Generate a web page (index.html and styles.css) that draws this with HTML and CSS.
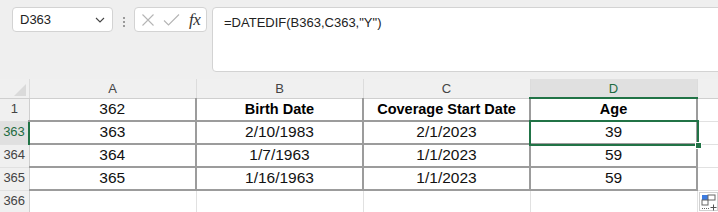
FILE: index.html
```html
<!DOCTYPE html>
<html lang="en">

<head>
    <meta charset="UTF-8">
    <title>DATEDIF Age</title>
    <link rel="stylesheet" href="styles.css">
</head>

<body>
    <div class="ribbon">
        <div class="name-box">
            <span>D363</span>
            <svg class="chevron" width="10" height="6" viewBox="0 0 10 6">
                <path d="M1 1 L5 5 L9 1" fill="none" stroke="#444" stroke-width="1.1"/>
            </svg>
        </div>
        <div class="dots"><i></i><i></i><i></i></div>
        <div class="fx-box">
            <svg width="14" height="14" viewBox="0 0 14 14">
                <path d="M1.5 1.5 L12.5 12.5 M12.5 1.5 L1.5 12.5" stroke="#b5b5b5" stroke-width="1.1"/>
            </svg>
            <svg width="17" height="14" viewBox="0 0 17 14">
                <path d="M1 7.5 L5.5 12 L16 1.5" fill="none" stroke="#b5b5b5" stroke-width="1.1"/>
            </svg>
            <span class="fx">fx</span>
        </div>
        <div class="formula-bar">=DATEDIF(B363,C363,"Y")</div>
    </div>

    <div class="sheet">
        <table class="grid">
            <colgroup>
                <col class="col-rh">
                <col class="col-w">
                <col class="col-w">
                <col class="col-w">
                <col class="col-w">
                <col class="col-e">
            </colgroup>
            <tr class="head-row">
                <th class="corner"><span class="tri"></span></th>
                <th>A</th>
                <th>B</th>
                <th>C</th>
                <th class="active">D</th>
                <th></th>
            </tr>
            <tr>
                <td class="rh">1</td>
                <td class="b">362</td>
                <td class="b bold">Birth Date</td>
                <td class="b bold">Coverage Start Date</td>
                <td class="b bold">Age</td>
                <td></td>
            </tr>
            <tr>
                <td class="rh active">363</td>
                <td class="b">363</td>
                <td class="b">2/10/1983</td>
                <td class="b">2/1/2023</td>
                <td class="b">39</td>
                <td></td>
            </tr>
            <tr>
                <td class="rh">364</td>
                <td class="b">364</td>
                <td class="b">1/7/1963</td>
                <td class="b">1/1/2023</td>
                <td class="b">59</td>
                <td></td>
            </tr>
            <tr>
                <td class="rh">365</td>
                <td class="b">365</td>
                <td class="b">1/16/1963</td>
                <td class="b">1/1/2023</td>
                <td class="b">59</td>
                <td></td>
            </tr>
            <tr>
                <td class="rh">366</td>
                <td></td>
                <td></td>
                <td></td>
                <td></td>
                <td></td>
            </tr>
        </table>

        <!-- active cell D363 -->
        <div class="selection"><span class="handle"></span></div>

        <div class="paste-opts">
            <svg width="19" height="19" viewBox="0 0 19 19">
                <rect x="2" y="2" width="6" height="5" fill="#3c7be0"/>
                <rect x="8" y="2" width="7" height="5" fill="none" stroke="#666" stroke-width="1"/>
                <rect x="2" y="7" width="6" height="5" fill="none" stroke="#666" stroke-width="1"/>
                <path d="M2 15.5 H3 M4 15.5 H5 M6 15.5 H7 M8 15.5 H9" stroke="#666" stroke-width="1"/>
                <path d="M13.5 11.5 V17.5 M10.5 14.5 H16.5" stroke="#555" stroke-width="1"/>
            </svg>
        </div>
    </div>
</body>

</html>
```

FILE: styles.css
```css
/* Global */
* {
    margin: 0;
    padding: 0;
    box-sizing: border-box;
}

body {
    background-color: #fff;
    font-family: 'Liberation Sans', Arial, sans-serif;
    color: #000;
    width: 718px;
    height: 212px;
    overflow: hidden;
}

/* Formula bar area */
.ribbon {
    display: flex;
    align-items: flex-start;
    height: 80px;
    padding: 7px 0 0 12px;
    background-color: #efefef;
    overflow: hidden;
}

.name-box {
    display: flex;
    align-items: center;
    justify-content: space-between;
    width: 101px;
    height: 25px;
    padding: 0 7px 0 7px;
    background-color: #fff;
    border: 1px solid #d3d3d3;
    border-radius: 4px;
    font-size: 13px;
    color: #222;
}

.chevron {
    margin-top: 1px;
}

.dots {
    display: flex;
    flex-direction: column;
    align-items: center;
    gap: 2px;
    width: 21px;
    padding-top: 10px;
}

.dots i {
    display: block;
    width: 2px;
    height: 2px;
    background-color: #9a9a9a;
}

.fx-box {
    display: flex;
    align-items: center;
    gap: 8px;
    width: 73px;
    height: 25px;
    padding-left: 6px;
    background-color: #fff;
    border: 1px solid #d3d3d3;
    border-radius: 4px;
}

.fx {
    font-family: 'Liberation Serif', serif;
    font-style: italic;
    font-size: 17px;
    color: #333;
    letter-spacing: -0.5px;
    margin-left: 1px;
}

.formula-bar {
    flex: 1;
    height: 65px;
    margin-left: 5px;
    margin-right: -12px;
    padding: 7px 0 0 11px;
    background-color: #fff;
    border: 1px solid #d3d3d3;
    border-radius: 4px;
    font-size: 13px;
    color: #222;
}

/* Sheet grid */
.sheet {
    position: relative;
}

.grid {
    border-collapse: collapse;
    table-layout: fixed;
    width: 740px;
    margin-top: -1px;
}

.col-rh {
    width: 29px;
}

.col-w {
    width: 167px;
}

.col-e {
    width: 48px;
}

.grid td {
    height: 23px;
    border: 1px solid #e1e1e1;
    text-align: center;
    vertical-align: bottom;
    padding: 0 0 2px;
    font-size: 15.5px;
    line-height: 18px;
    color: #111;
}

.head-row th {
    height: 19px;
    background-color: #f0f0f0;
    border-right: 1px solid #dcdcdc;
    border-bottom: 1px solid #cfcfcf;
    font-weight: normal;
    font-size: 13px;
    color: #444;
    vertical-align: middle;
}

.head-row th.active {
    background-color: #e0e0e0;
    color: #1e6b41;
    border-bottom: 2px solid #217346;
}

.corner {
    position: relative;
}

.tri {
    position: absolute;
    right: 3px;
    bottom: 2px;
    width: 0;
    height: 0;
    border-left: 12px solid transparent;
    border-bottom: 12px solid #dadada;
}

.grid td.rh {
    background-color: #f0f0f0;
    border-right: 1px solid #cfcfcf;
    border-left: none;
    border-bottom: 1px solid #e1e1e1;
    font-size: 13px;
    color: #444;
    padding-bottom: 3px;
}

.grid td.rh.active {
    background-color: #e0e0e0;
    color: #1e6b41;
    border-right: 2px solid #217346;
}

.grid td.b {
    border-right: 2px solid #9c9c9c;
    border-bottom: 2px solid #9c9c9c;
}

.grid td.bold {
    font-weight: bold;
    font-size: 14.5px;
    color: #000;
}

/* Active cell overlay */
.selection {
    position: absolute;
    left: 529px;
    top: 41px;
    width: 170px;
    height: 26px;
    border: 2px solid #217346;
}

.handle {
    position: absolute;
    right: -5px;
    bottom: -5px;
    width: 7px;
    height: 7px;
    background-color: #217346;
    border: 1px solid #fff;
}

.paste-opts {
    position: absolute;
    left: 699px;
    top: 113px;
    width: 19px;
    height: 19px;
    background-color: #fff;
    border: 1px solid #d0d0d0;
}
```
